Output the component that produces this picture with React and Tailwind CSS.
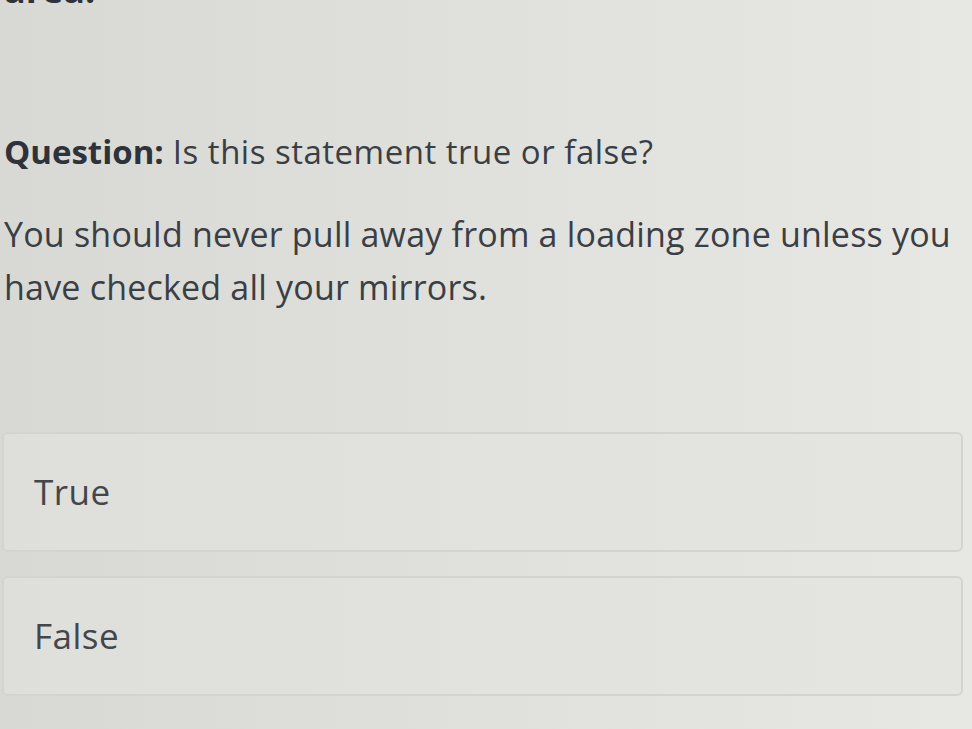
import React from 'react';

const options = ['True', 'False'];

function Option({ label }) {
    return (
        <div className="h-[120px] rounded-md border-2 border-[#d3d4cf] bg-[#e2e3df]/60 flex items-center pl-[30px]">
            <p className="text-[35px] tracking-[0.5px] text-[#43464b]">{label}</p>
        </div>
    );
}

export default function App() {
    return (
        <div className="w-[972px] h-[729px] overflow-hidden bg-gradient-to-r from-[#d8d9d4] via-[#e0e1dd] to-[#e7e8e4] font-['Open_Sans',sans-serif]">
            <p className="-mt-[30px] pl-[4px] text-[36px] font-bold text-[#2e323a] leading-[40px]">area.</p>

            <div className="pl-[4px] pt-[122px]">
                <p className="text-[33px] tracking-[0.5px] text-[#3a3e45] leading-[40px]">
                    <span className="font-bold tracking-normal text-[#2e323a]">Question:</span> Is this statement true or false?
                </p>
                <p className="mt-[36px] whitespace-nowrap text-[34px] tracking-[0.2px] text-[#3a3e45] leading-[53px]">
                    You should never pull away from a loading zone unless you
                    <br />
                    have checked all your mirrors.
                </p>
            </div>

            <div className="mt-[118px] pl-[2px] pr-[9px] flex flex-col gap-[24px]">
                {options.map((o) => (
                    <Option key={o} label={o} />
                ))}
            </div>
        </div>
    );
}
